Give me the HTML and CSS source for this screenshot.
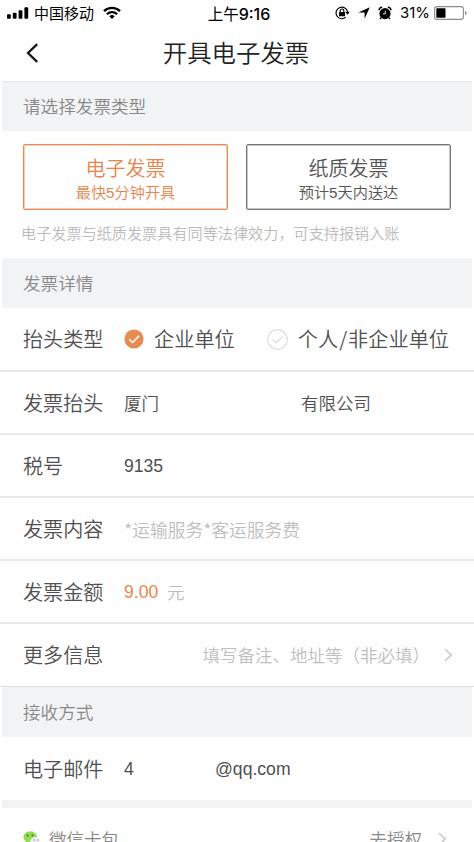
FILE: index.html
```html
<!DOCTYPE html>
<html lang="zh-CN">
<head>
<meta charset="utf-8">
<meta name="viewport" content="width=device-width">
<title>开具电子发票</title>
<link rel="stylesheet" href="styles.css">
</head>
<body>
<div class="status">
  <div class="status-left">
    <svg class="signal" width="22" height="14" viewBox="0 0 22 14"><rect x="0" y="8.3" width="3.8" height="4.5" rx="1"/><rect x="5.8" y="6.8" width="3.8" height="6" rx="1"/><rect x="11.6" y="4.2" width="3.8" height="8.6" rx="1"/><rect x="17.4" y="1.2" width="3.8" height="11.6" rx="1"/></svg>
    <span class="carrier">中国移动</span>
    <svg class="wifi" width="18" height="14" viewBox="0 0 18 14" fill="none" stroke="#000"><path d="M1 5.2a11.4 11.4 0 0 1 16 0" stroke-width="2.4"/><path d="M3.9 8.2a7.3 7.3 0 0 1 10.2 0" stroke-width="2.2"/><path d="M6.3 10.3a3.8 3.8 0 0 1 5.4 0L9 13z" fill="#000" stroke="none"/></svg>
  </div>
  <span class="time">上午<b>9:16</b></span>
  <div class="status-right">
    <svg width="15" height="14" viewBox="0 0 15 14"><path d="M10.8 11.2A5.8 5.8 0 1 1 12.6 6" fill="none" stroke="#000" stroke-width="1.1"/><path d="M10.2 5.8h4.5l-2.2 3z"/><rect x="4" y="6" width="6" height="4.3" rx=".5"/><path d="M5.2 6V4.8a1.8 1.8 0 0 1 3.6 0V6" fill="none" stroke="#000" stroke-width="1.1"/></svg>
    <svg class="locate" width="12" height="12" viewBox="0 0 12 12"><path d="M11.8.3 6.6 11.7V5.6H.4z"/></svg>
    <svg class="alarm" width="14" height="14" viewBox="0 0 14 14"><circle cx="7" cy="7.6" r="5.6"/><path d="M1.1 4.2A3 3 0 0 1 4.2 1.2M12.9 4.2A3 3 0 0 0 9.8 1.2M3 11.8l-1 1.1M11 11.8l1 1.1" fill="none" stroke="#000" stroke-width="1.6"/><path d="M7.3 4.8v3H5" fill="none" stroke="#fff" stroke-width=".9"/></svg>
    <span class="percent">31%</span>
    <svg width="33" height="14" viewBox="0 0 33 14"><rect x=".6" y=".6" width="28.8" height="12.8" rx="2.5" fill="none" stroke="#8c8c8c" stroke-width="1.1"/><rect x="2.3" y="2.2" width="9.2" height="9.6" rx=".7"/><path d="M31 4.8q1.6.7 1.6 2.2T31 9.2z" fill="#888"/></svg>
  </div>
</div>
<header class="nav">
  <svg class="back" width="13" height="20" viewBox="0 0 13 20"><path d="M11.2 1.2 2 10l9.2 8.8"/></svg>
  <h1>开具电子发票</h1>
</header>
<h2 class="band band-top">请选择发票类型</h2>
<section class="types">
  <div class="cards">
    <div class="card active"><strong>电子发票</strong><span>最快<i>5</i>分钟开具</span></div>
    <div class="card"><strong>纸质发票</strong><span>预计<i>5</i>天内送达</span></div>
  </div>
  <p class="note">电子发票与纸质发票具有同等法律效力，可支持报销入账</p>
</section>
<h2 class="band">发票详情</h2>
<section class="rows">
  <div class="row">
    <span class="label">抬头类型</span>
    <svg class="check on" width="20" height="20" viewBox="0 0 20 20"><circle cx="10" cy="10" r="9.6"/><path d="m5.2 10.3 3.3 3.2 6.6-6.6"/></svg>
    <span class="choice first">企业单位</span>
    <svg class="check" width="21" height="21" viewBox="0 0 20 20"><circle cx="10" cy="10" r="9.4"/><path d="m5.4 10 3.2 3.1 6.2-6.2"/></svg>
    <span class="choice">个人<span class="slash">/</span>非企业单位</span>
  </div>
  <div class="row"><span class="label">发票抬头</span><span class="value name">厦门</span><span class="value">有限公司</span></div>
  <div class="row"><span class="label">税号</span><span class="value latin">9135</span></div>
  <div class="row"><span class="label">发票内容</span><span class="value muted content">*运输服务*客运服务费</span></div>
  <div class="row"><span class="label">发票金额</span><span class="value latin amount">9.00</span><span class="value muted">元</span></div>
  <div class="row"><span class="label">更多信息</span><span class="value muted hint">填写备注、地址等（非必填）</span><svg class="chevron" width="9" height="14" viewBox="0 0 9 14"><path d="m1.2 1.2 6 5.8-6 5.8"/></svg></div>
</section>
<h2 class="band">接收方式</h2>
<section>
  <div class="row email"><span class="label">电子邮件</span><span class="value latin user">4</span><span class="value latin">@qq.com</span></div>
</section>
<div class="gap"></div>
<div class="wallet">
  <svg class="wechat" width="18" height="16" viewBox="0 0 18 16"><ellipse cx="7.2" cy="6" rx="6.8" ry="5.8" fill="#8fdc52"/><path d="m3 9-.8 4L6 11z" fill="#8fdc52"/><circle cx="4.6" cy="4.4" r=".9" fill="#3c6425"/><circle cx="9.4" cy="4.4" r=".9" fill="#3c6425"/><ellipse cx="12.4" cy="10.6" rx="5.2" ry="4.5" fill="#f1f2f8"/><circle cx="11" cy="9" r=".8" fill="#8b91a8"/><circle cx="14.6" cy="9" r=".8" fill="#8b91a8"/></svg>
  <span class="wallet-name">微信卡包</span>
  <span class="grant">去授权</span>
  <svg class="chevron" width="9" height="14" viewBox="0 0 9 14"><path d="m1.2 1.2 6 5.8-6 5.8"/></svg>
</div>
</body>
</html>
```
FILE: styles.css
```css
* { box-sizing: border-box; }
html { overflow: hidden; }
body {
  margin: 0;
  width: 474px;
  height: 842px;
  overflow: hidden;
  background: #fefefe;
  color: #505050;
  font-family: "Noto Sans CJK SC", sans-serif;
  font-weight: 350;
  white-space: nowrap;
}
svg { display: block; flex: none; }
h1, h2, p { margin: 0; font-weight: 350; }
i { font-style: normal; font-family: "Liberation Sans", sans-serif; }

.status {
  display: grid;
  grid-template-columns: 1fr auto 1fr;
  align-items: center;
  height: 26px;
  padding: 0 7px;
  color: #000;
  font-size: 15px;
  line-height: 20px;
  font-weight: 400;
}
.status-left, .status-right { display: flex; align-items: center; }
.carrier { margin-left: 5px; }
.wifi { margin-left: 9px; }
.time { padding-left: 4px; font-size: 15.5px; }
.time b { font: 500 16px Inter, sans-serif; }
.status-right { justify-content: flex-end; }
.locate { margin-left: 8px; }
.alarm { margin-left: 8px; }
.percent { margin: 0 4px 0 8px; font: 400 14.9px Inter, sans-serif; }

.nav {
  display: grid;
  grid-template-columns: 26px 1fr 26px;
  align-items: center;
  height: 55px;
  padding: 0 2px 3px 0;
}
.back { margin: 2px 0 0 26px; }
.back path { fill: none; stroke: #161616; stroke-width: 2.3; }
.nav h1 { text-align: center; font-size: 24.4px; line-height: 36px; color: #222; }

.band {
  height: 50px;
  margin: 0 2px;
  padding-left: 21px;
  background: #f2f3f5;
  color: #888;
  font-size: 17.6px;
  line-height: 49px;
}
.band-top { border-top: 1px solid #e5e6e8; line-height: 47px; }

.types { height: 127px; padding: 13px 23px 0; }
.cards { display: grid; grid-template-columns: 205px 205px; gap: 18px; }
.card {
  height: 66px;
  padding-top: 9px;
  border: 1px solid #777;
  box-shadow: inset 0 0 0 1px #7776;
  border-radius: 2px;
  text-align: center;
  color: #555;
}
.card strong, .card span { display: block; font-weight: 350; }
.card strong { font-size: 20px; line-height: 28px; }
.card span { font-size: 15.2px; line-height: 18px; }
.card.active { color: #e8854d; border-color: #e98952; box-shadow: inset 0 0 0 1px #e9895266; }
.note { margin: 12px 0 0 -2px; font-size: 15.15px; line-height: 20px; color: #bbb; }

.row {
  display: flex;
  align-items: center;
  height: 63px;
  padding: 0 21px 0 23px;
  border-bottom: 2px solid #e9e9e9;
}
.rows .row:first-child { height: 64px; }
.rows .row:last-child { border-bottom: 1px solid #ddd; }
.label { width: 101px; font-size: 20.1px; line-height: 30px; }
.value { font-size: 17.5px; line-height: 26px; }
.latin { font-family: "Liberation Sans", sans-serif; font-size: 17.6px; font-weight: 400; }
.muted { color: #bebebe; }
.check { fill: none; stroke: #dedede; stroke-width: 1.2; }
.check.on { fill: #e88b51; stroke: none; }
.check.on path { fill: none; stroke: #fff; stroke-width: 1.5; }
.choice { margin-left: 10px; font-size: 20.2px; line-height: 30px; }
.first { margin-right: 32px; }
.slash { padding: 0 1px; }
.name { width: 177px; }
.content { font-size: 17.75px; }
.amount { width: 43px; color: #ec8549; }
.hint { margin-left: auto; margin-right: 14px; }
.chevron { fill: none; stroke: #c6c6c6; stroke-width: 1.5; }
.user { width: 91px; }
.row.email { height: 63px; border: 0; }
.gap { height: 8px; margin: 0 2px; background: #f2f3f5; }

.wallet {
  display: flex;
  align-items: center;
  height: 61px;
  padding: 0 27px 0 23px;
  font-size: 17.5px;
  line-height: 26px;
  color: #888;
}
.wallet-name { margin-left: 8px; }
.grant { margin-left: auto; margin-right: 16px; }
```
